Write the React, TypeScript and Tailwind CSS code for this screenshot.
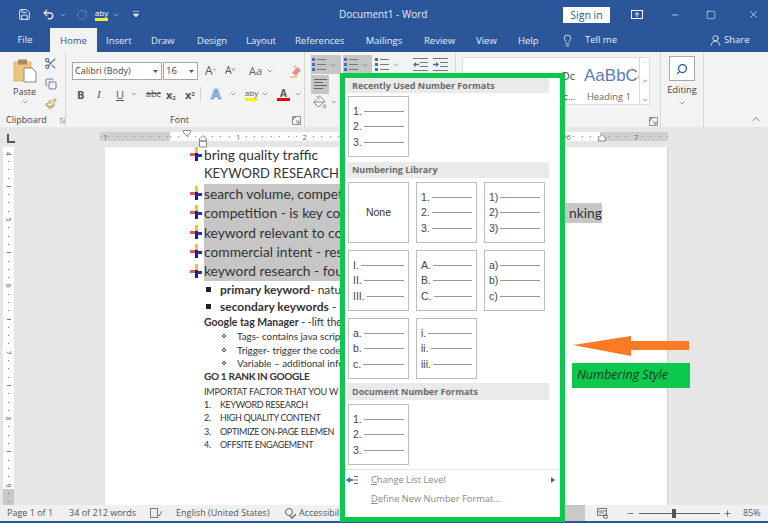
import React from "react";
import { Save, Undo2, RotateCw, ChevronDown, Scissors, Copy, Paintbrush, Lightbulb, UserRound, X, Minus, Square, Search, ChevronUp, Plus, PaintBucket } from "lucide-react";

const ui = "font-['Open_Sans',sans-serif]";

function Launcher() {
  return (
    <svg width="9" height="9" viewBox="0 0 9 9" className="text-[#777]">
      <path d="M.5 8.5V.5h8v8z M4 1.5H1.5V4 M4 4l3 3 M7 4.5V7H4.5" fill="none" stroke="currentColor" strokeWidth="0.8" />
    </svg>
  );
}

function Chev({ c = "text-[#777]", s = 8 }: { c?: string; s?: number }) {
  return <ChevronDown size={s} className={c} strokeWidth={2} />;
}

function ListGlyph({ hl }: { hl?: boolean }) {
  return (
    <svg width="15" height="15" viewBox="0 0 15 15">
      <g fill={hl ? "#3f73b5" : "#2b79c2"}>
        <rect x="0" y="1" width="3" height="3" />
        <rect x="0" y="6" width="3" height="3" />
        <rect x="0" y="11" width="3" height="3" />
      </g>
      <g stroke="#777" strokeWidth="1">
        <path d="M5 2.5h9M5 7.5h9M5 12.5h9" />
      </g>
    </svg>
  );
}

function IndentGlyph({ dir }: { dir: "l" | "r" }) {
  return (
    <svg width="15" height="13" viewBox="0 0 15 13">
      <g stroke="#777" strokeWidth="1">
        <path d="M0 .5h15M7 4.5h8M7 8.5h8M0 12.5h15" />
      </g>
      <path d={dir === "l" ? "M0 6.5l3-2.5v1.7h3v1.6H3V9z" : "M6 6.5L3 4v1.7H0v1.6h3V9z"} fill="#2b79c2" />
    </svg>
  );
}

function Tile({ rows, children }: { rows?: string[]; children?: React.ReactNode }) {
  return (
    <div className="w-[61px] h-[61px] border border-[#bdbdbd] bg-white flex flex-col justify-center gap-[4px] pl-[4px] pr-[4px] font-['Liberation_Sans',sans-serif] text-[10.5px] text-[#444]">
      {rows
        ? rows.map((r) => (
            <div key={r} className="h-[11.5px] flex items-center gap-[2px] leading-none">
              <span>{r}</span>
              <span className="flex-1 h-px bg-[#999]" />
            </div>
          ))
        : children}
    </div>
  );
}

function MenuHeader({ children, h }: { children: React.ReactNode; h: string }) {
  return (
    <div className={`${h} w-[202px] bg-[#eaeaea] flex items-center pl-[5px] text-[9px] font-bold text-[#6a6a6a] ${ui}`}>
      {children}
    </div>
  );
}

function IndentGlyphSmall() {
  return (
    <svg width="12" height="8" viewBox="0 0 12 8">
      <path d="M0 4l4-3v2h3v2H4v2z" fill="#2b79c2" />
      <path d="M8 .5h4M8 4h4M8 7.5h4" stroke="#666" strokeWidth="1" />
    </svg>
  );
}

function Dropdown() {
  return (
    <div className="absolute left-[340px] top-[73px] w-[225px] h-[449px] border-[5px] border-[#0dc84f] bg-white flex flex-col pl-[2px] pt-0">
      <MenuHeader h="h-[15px]">Recently Used Number Formats</MenuHeader>
      <div className="mt-[3px] ml-px">
        <Tile rows={["1.", "2.", "3."]} />
      </div>
      <div className="mt-[5px]">
        <MenuHeader h="h-[16px]">Numbering Library</MenuHeader>
      </div>
      <div className="mt-[4px] ml-px grid grid-cols-[61px_61px_61px] gap-[7px]">
        <Tile>
          <div className="text-center text-[10.5px] text-[#333]">None</div>
        </Tile>
        <Tile rows={["1.", "2.", "3."]} />
        <Tile rows={["1)", "2)", "3)"]} />
        <Tile rows={["I.", "II.", "III."]} />
        <Tile rows={["A.", "B.", "C."]} />
        <Tile rows={["a)", "b)", "c)"]} />
        <Tile rows={["a.", "b.", "c."]} />
        <Tile rows={["i.", "ii.", "iii."]} />
      </div>
      <div className="mt-[4px]">
        <MenuHeader h="h-[17px]">Document Number Formats</MenuHeader>
      </div>
      <div className="mt-[4px] ml-px">
        <Tile rows={["1.", "2.", "3."]} />
      </div>
      <div className="mt-[4px] -ml-[2px] h-px w-[214px] bg-[#e4e4e4]" />
      <div className={`h-[20px] flex items-center text-[9.3px] text-[#8a8a8a] ${ui}`}>
        <span className="w-[25px] -ml-px">
          <IndentGlyphSmall />
        </span>
        <span><u>C</u>hange List Level</span>
        <svg width="4" height="6" viewBox="0 0 4 6" className="ml-auto mr-[5px]"><path d="M0 0l4 3-4 3z" fill="#666" /></svg>
      </div>
      <div className={`h-[18px] flex items-center pl-[24px] text-[9.3px] text-[#8a8a8a] ${ui}`}>
        <span><u>D</u>efine New Number Format...</span>
      </div>
    </div>
  );
}

function TitleBar() {
  return (
    <div className={`h-[29px] flex items-center text-white ${ui}`}>
      <span className="w-[18px]" />
      <Save size={13} strokeWidth={1.6} />
      <span className="w-[11px]" />
      <Undo2 size={13} strokeWidth={2} />
      <span className="w-[4px]" />
      <Chev c="text-[#b7c7e0]" />
      <span className="w-[9px]" />
      <RotateCw size={12} className="text-[#5f7fb5]" />
      <span className="w-[6px]" />
      <div className="w-[15px] h-[14px] flex flex-col items-center">
        <span className="text-[8px] leading-[10px]">aby</span>
        <span className="w-[13px] h-[3px] bg-[#f5ee2c]" />
      </div>
      <span className="w-[3px]" />
      <Chev c="text-[#b7c7e0]" />
      <span className="w-[13px]" />
      <svg width="6" height="7" viewBox="0 0 6 7"><path d="M0 .5h6M0 3h6l-3 3z" fill="#dfe6f2" stroke="#dfe6f2" strokeWidth="0.6" /></svg>
      <span className="w-[200px]" />
      <span className="text-[10px] text-[#e4eaf4] w-[224px] whitespace-pre">Document1 - Word</span>
      <span className="w-[47px] h-[16px] bg-white text-[#2b579a] text-[10.5px] leading-[16px] text-center">Sign in</span>
      <span className="w-[21px]" />
      <svg width="12" height="9" viewBox="0 0 12 9" className="mb-[1px]"><rect x=".5" y=".5" width="11" height="8" fill="none" stroke="#fff" /><path d="M6 7V3M4 4.5L6 2.5 8 4.5" fill="none" stroke="#fff" /></svg>
      <span className="w-[27px]" />
      <Minus size={10} strokeWidth={1.5} className="text-white" />
      <span className="w-[26px]" />
      <Square size={10} strokeWidth={1.3} className="text-white" />
      <span className="w-[32px]" />
      <X size={11} strokeWidth={1.5} className="text-white" />
    </div>
  );
}

function Tabs() {
  const t = "text-[9.5px] text-[#e6ecf6] text-center whitespace-nowrap";
  return (
    <div className={`h-[23px] flex items-stretch ${ui}`}>
      <span className="w-[13px]" />
      <span className={`${t} w-[24px] leading-[22px]`}>File</span>
      <span className="w-[13px]" />
      <span className="w-[47px] -mt-px bg-[#f3f3f3] text-[#2b579a] text-[9.5px] text-center leading-[26px]">Home</span>
      <span className="w-[9px]" />
      <span className={`${t} w-[20px] leading-[24px]`}>Insert</span>
      <span className="w-[25px]" />
      <span className={`${t} w-[22px] leading-[24px]`}>Draw</span>
      <span className="w-[24px]" />
      <span className={`${t} w-[30px] leading-[24px]`}>Design</span>
      <span className="w-[19px]" />
      <span className={`${t} w-[29px] leading-[24px]`}>Layout</span>
      <span className="w-[20px]" />
      <span className={`${t} w-[46px] leading-[24px]`}>References</span>
      <span className="w-[24px]" />
      <span className={`${t} w-[38px] leading-[24px]`}>Mailings</span>
      <span className="w-[21px]" />
      <span className={`${t} w-[30px] leading-[24px]`}>Review</span>
      <span className="w-[22px]" />
      <span className={`${t} w-[20px] leading-[24px]`}>View</span>
      <span className="w-[22px]" />
      <span className={`${t} w-[20px] leading-[24px]`}>Help</span>
      <span className="w-[23px]" />
      <span className="w-[24px] flex items-center"><Lightbulb size={13} className="text-white" strokeWidth={1.4} /></span>
      <span className={`${t} w-[31px] leading-[22px]`}>Tell me</span>
      <span className="w-[93px]" />
      <span className="w-[15px] flex items-center"><UserRound size={13} className="text-white" strokeWidth={1.4} /></span>
      <span className={`${t} w-[25px] leading-[22px]`}>Share</span>
    </div>
  );
}

function Clipboard() {
  return (
    <div className="w-[66px] h-[75px] pl-[6px] border-r border-[#d8d8d8] flex flex-col">
      <div className="flex h-[61px]">
        <div className="w-[37px] flex flex-col items-center text-[9px] text-[#444] pt-[7px]">
          <svg width="24" height="24" viewBox="0 0 24 24">
            <rect x="1" y="3" width="17" height="19" fill="#eec57f" stroke="#c99a4d" strokeWidth="0.6" />
            <rect x="5" y="0.5" width="9" height="5" fill="#a88a58" />
            <path d="M11 9h8l4 4v10H11z" fill="#fff" stroke="#888" />
          </svg>
          <span className="leading-[12px] mt-[3px]">Paste</span>
          <Chev />
        </div>
        <div className="flex flex-col items-center gap-[8px] pt-[5px] ml-[1px]">
          <Scissors size={13} className="text-[#51698f]" />
          <Copy size={12} className="text-[#6a7c99]" />
          <Paintbrush size={12} className="text-[#b98b3a]" />
        </div>
      </div>
      <div className="flex items-center h-[14px] text-[9px] text-[#444] gap-[13px]">
        <span>Clipboard</span>
        <Launcher />
      </div>
    </div>
  );
}

function FontGroup() {
  const b = "text-[11px] text-[#555] leading-none";
  return (
    <div className="w-[239px] h-[75px] border-r border-[#d8d8d8] flex flex-col">
      <div className="h-[61px] flex flex-col pl-[6px]">
        <div className="flex items-center mt-[10px] h-[18px]">
          <div className="w-[90px] h-[18px] border border-[#a8a8a8] bg-white flex items-center pl-[2px] pr-[3px] text-[9px] text-[#444]">
            Calibri (Body)
            <svg width="5" height="3" viewBox="0 0 5 3" className="ml-auto"><path d="M0 0h5L2.5 3z" fill="#555" /></svg>
          </div>
          <div className="w-[35px] ml-[1px] h-[18px] border border-[#a8a8a8] bg-white flex items-center pl-[2px] pr-[3px] text-[9.5px] text-[#444]">
            16
            <svg width="5" height="3" viewBox="0 0 5 3" className="ml-auto"><path d="M0 0h5L2.5 3z" fill="#555" /></svg>
          </div>
          <span className="ml-[7px] w-[20px] text-[12px] text-[#555]">A<sup className="text-[6px] text-[#2b79c2]">^</sup></span>
          <span className="w-[22px] text-[10.5px] text-[#555]">A<sup className="text-[6px] text-[#2b79c2]">v</sup></span>
          <span className="ml-[2px] text-[11px] text-[#666] w-[14px]">Aa</span>
          <span className="ml-[3px]"><Chev /></span>
          <span className="ml-[16px]">
            <svg width="13" height="13" viewBox="0 0 13 13"><path d="M2 8l5-6 4 3-5 6z" fill="#e98a9a" /><path d="M0 12h7" stroke="#d8a93c" /><path d="M5 0v3" stroke="#d8a93c" /></svg>
          </span>
        </div>
        <div className="flex items-center mt-[5px] h-[18px]">
          <span className={`${b} w-[20px] ml-[5px] font-bold`}>B</span>
          <span className={`${b} w-[19px] italic font-['Liberation_Serif',serif]`}>I</span>
          <span className={`${b} w-[14px] underline`}>U</span>
          <Chev />
          <span className="ml-[8px] text-[9px] text-[#555] line-through w-[20px]">abc</span>
          <span className={`${b} w-[19px] font-bold`}>x<sub className="text-[6px]">2</sub></span>
          <span className={`${b} w-[15px] font-bold`}>x<sup className="text-[6px]">2</sup></span>
          <span className="w-px h-[14px] bg-[#d0d0d0]" />
          <span className="ml-[10px] w-[17px] text-[14px] leading-none font-bold text-[#a9c8ee] [-webkit-text-stroke:0.6px_#2b79c2]">A</span>
          <span className="ml-[1px]"><Chev /></span>
          <div className="ml-[8px] w-[13px] flex flex-col items-center">
            <span className="text-[8px] leading-[10px] text-[#555]">aby</span>
            <span className="w-[13px] h-[3px] bg-[#ffee00]" />
          </div>
          <span className="ml-[3px]"><Chev /></span>
          <div className="ml-[8px] w-[13px] flex flex-col items-center">
            <span className="text-[10px] leading-[10px] font-bold text-[#555]">A</span>
            <span className="w-[13px] h-[3px] bg-[#e8000d]" />
          </div>
          <span className="ml-[4px]"><Chev /></span>
        </div>
      </div>
      <div className="h-[14px] flex items-center text-[9px] text-[#444]">
        <span className="flex-1 text-center pl-[1px]">Font</span>
        <span className="mr-[3px]"><Launcher /></span>
      </div>
    </div>
  );
}

function ParagraphGroup() {
  return (
    <div className="w-[151px] h-[75px] pl-[6px] pt-[3px] border-r border-[#d8d8d8] flex flex-col">
      <div className="flex items-center">
        <div className="w-[30px] h-[19px] bg-[#c6c6c6] flex items-center pl-[1px] gap-[2px]"><ListGlyph hl /><Chev /></div>
        <div className="ml-[2px] w-[29px] h-[19px] bg-[#c6c6c6] flex items-center pl-[1px] gap-[2px]"><ListGlyph hl /><Chev /></div>
        <div className="ml-[3px] w-[26px] h-[19px] flex items-center gap-[2px]"><ListGlyph /><Chev /></div>
        <span className="ml-[12px]"><IndentGlyph dir="l" /></span>
        <span className="ml-[5px]"><IndentGlyph dir="r" /></span>
      </div>
      <div className="flex items-center mt-[1px]">
        <div className="w-[18px] h-[19px] bg-[#c6c6c6] flex items-center justify-center">
          <svg width="13" height="11" viewBox="0 0 13 11"><path d="M0 .5h13M0 3.5h9M0 6.5h13M0 9.5h9" stroke="#666" /></svg>
        </div>
      </div>
      <div className="flex items-center mt-[1px] pl-[2px] gap-[3px]">
        <PaintBucket size={14} className="text-[#777]" strokeWidth={1.4} />
        <Chev />
      </div>
    </div>
  );
}

function Gallery() {
  return (
    <div className="w-[205px] h-[75px] border-r border-[#d8d8d8] flex flex-col pl-[6px] pt-[5px]">
      <div className="w-[188px] h-[48px] bg-white border border-[#dcdcdc] flex justify-end">
        <div className="flex flex-col items-end mt-[6px] mr-[5px] text-[#444]">
          <span className="text-[11px] leading-[24px]">Dc</span>
          <span className="text-[9px] leading-[14px] mt-[2px]">c...</span>
        </div>
        <div className="flex flex-col items-start mt-[6px] ml-[4px] w-[55px] overflow-hidden">
          <span className="text-[17px] leading-[24px] text-[#5b7db0] font-['Liberation_Sans',sans-serif] whitespace-nowrap">AaBbCc</span>
          <span className="text-[9.3px] leading-[14px] mt-[2px] ml-[3px] text-[#666] whitespace-nowrap">Heading 1</span>
        </div>
        <div className="w-[10px] border-l border-[#dcdcdc] flex flex-col items-center justify-between text-[#777]">
          <ChevronUp size={8} className="text-[#ccc]" />
          <ChevronDown size={8} />
          <ChevronDown size={8} />
        </div>
      </div>
      <div className="mt-[12px] flex justify-end pr-[2px]"><Launcher /></div>
    </div>
  );
}

function Editing() {
  return (
    <div className="w-[43px] h-[75px] border-r border-[#d8d8d8] flex flex-col items-center pt-[4px]">
      <div className="w-[26px] h-[25px] border border-[#a8a8a8] bg-white flex items-center justify-center">
        <Search size={12} strokeWidth={2.5} className="text-[#2b579a] -scale-x-100" />
      </div>
      <span className="text-[9.3px] text-[#444] mt-[2px] leading-[14px]">Editing</span>
      <span className="mt-[2px]"><Chev /></span>
    </div>
  );
}

function Ribbon() {
  return (
    <div className={`h-[75px] bg-[#f3f3f3] flex ${ui}`}>
      <Clipboard />
      <FontGroup />
      <ParagraphGroup />
      <Gallery />
      <Editing />
      <div className="flex-1 flex items-end justify-end pr-[6px] pb-[2px]">
        <ChevronUp size={12} className="text-[#777]" />
      </div>
    </div>
  );
}

function Ruler() {
  const ticks = "relative text-[8px] text-[#666] leading-[9px]";
  const dots = "absolute left-0 right-0 top-[4px] h-px bg-[repeating-linear-gradient(90deg,#888_0,#888_1px,transparent_1px,transparent_8.4px)]";
  return (
    <div className={`relative h-[20px] bg-[#e6e6e6] flex items-start pt-[5px] ${ui}`}>
      <span className="w-[7px]" />
      <span className="w-[8px] h-[9px] mt-[2px] border-l-2 border-b-2 border-[#555] mr-[85px]" />
      <div className="relative w-[70px] h-[9px] bg-[#cfcfcf] flex items-center pl-[3px]">
        <span className={dots} />
        <span className={ticks}>1</span>
      </div>
      <div className="relative w-[430px] h-[9px] bg-white flex items-center">
        <span className={dots} />
        <span className={`${ticks} ml-[66px] bg-white`}>1</span>
        <span className={`${ticks} ml-[62px] bg-white`}>2</span>
        <span className={`${ticks} ml-[259px] bg-white`}>6</span>
      </div>
      <div className="relative w-[68px] h-[9px] bg-[#cfcfcf] flex items-center pl-[34px]">
        <span className={dots} />
        <span className={`${ticks} bg-[#cfcfcf]`}>7</span>
      </div>
      <svg width="8" height="7" viewBox="0 0 8 7" className="absolute left-[183px] top-[3px]"><path d="M.5.5h7v2L4 6 .5 2.500z" fill="#fff" stroke="#888" /></svg>
      <svg width="8" height="13" viewBox="0 0 8 13" className="absolute left-[199px] top-[8px]"><path d="M4 .5L7.500 4v2h-7V4zM.5 6h7v6h-7z" fill="#fff" stroke="#888" /></svg>
      <svg width="8" height="8" viewBox="0 0 8 8" className="absolute left-[598px] top-[7px]"><path d="M4 .5L7.500 4v3h-7V4z" fill="#fff" stroke="#888" /></svg>
    </div>
  );
}

function VBullet() {
  return (
    <svg width="12" height="15" viewBox="0 0 12 15" className="shrink-0">
      <rect x="0" y="6" width="6" height="3" fill="#e85a4a" />
      <rect x="5" y="0" width="3" height="6" fill="#f2c230" />
      <rect x="5" y="6" width="3" height="8" fill="#1c1c8c" />
      <rect x="7" y="7" width="5" height="3" fill="#2233b0" />
    </svg>
  );
}

function BulletLine({ children, sel, icon = true }: { children: React.ReactNode; sel?: boolean; icon?: boolean }) {
  return (
    <div className="h-[19.4px] flex items-center">
      <span className="w-[14px] -ml-[14px] flex">{icon && <VBullet />}</span>
      <span className={`text-[13.8px] text-[#333] leading-[19.4px] whitespace-nowrap ${sel ? "bg-[#c6c6c6] w-[140px]" : ""}`}>{children}</span>
    </div>
  );
}

function Page() {
  return (
    <div className="w-[563px] h-[358px] bg-white border-r border-[#cfcfcf] pl-[99px] font-['Lato',sans-serif] overflow-hidden">
      <div className="-mt-[2px]">
        <BulletLine>bring quality traffic</BulletLine>
        <div className="h-[19.4px] flex items-center text-[13px] leading-[19.4px] text-[#333] whitespace-nowrap">KEYWORD RESEARCH</div>
        <BulletLine sel>search volume, compet</BulletLine>
        <div className="h-[19.4px] flex items-center">
          <span className="w-[14px] -ml-[14px] flex"><VBullet /></span>
          <span className="bg-[#c6c6c6] w-[398px] flex justify-between text-[13.8px] text-[#333] leading-[19.4px]">
            <span>competition - is key co</span>
            <span>nking</span>
          </span>
        </div>
        <BulletLine sel>keyword relevant to co</BulletLine>
        <BulletLine sel>commercial intent - res</BulletLine>
        <BulletLine sel>keyword research - fou</BulletLine>
      </div>
      <div className="text-[12px] text-[#333] leading-[17px] pl-[2px]">
        <div className="flex items-center h-[17px]"><span className="w-[5px] h-[5px] bg-[#222] mr-[9px]" /><b>primary keyword</b>- natu</div>
        <div className="flex items-center h-[17px]"><span className="w-[5px] h-[5px] bg-[#222] mr-[9px]" /><b>secondary keywords</b>&nbsp;-</div>
      </div>
      <div className="text-[10.5px] leading-[14px] text-[#333]">
        <div className="h-[15px] whitespace-nowrap"><b>Google tag Manager</b> - -lift the h</div>
        {["Tags- contains java script", "Trigger- trigger the code", "Variable – additional info"].map((s) => (
          <div key={s} className="h-[13.5px] flex items-center pl-[18px] text-[9.8px] whitespace-nowrap">
            <span className="w-[4px] h-[4px] rounded-full border border-[#444] mr-[11px]" />
            {s}
          </div>
        ))}
        <div className="h-[15px] leading-[13px] font-bold text-[10px] tracking-[-0.3px] whitespace-nowrap">GO 1 RANK IN GOOGLE</div>
        <div className="h-[13px] leading-[13px] text-[9px] tracking-[-0.15px] whitespace-nowrap">IMPORTAT FACTOR THAT YOU W</div>
        {["KEYWORD RESEARCH", "HIGH QUALITY CONTENT", "OPTIMIZE ON-PAGE ELEMEN", "OFFSITE ENGAGEMENT"].map((s, i) => (
          <div key={s} className="h-[13.4px] flex items-center text-[9px] tracking-[-0.35px] whitespace-nowrap">
            <span className="w-[16px]">{i + 1}.</span>
            {s}
          </div>
        ))}
      </div>
    </div>
  );
}

function VRuler() {
  const items = Array.from({ length: 43 }, (_, i) => i);
  return (
    <div className={`w-[11px] ml-[3px] h-[358px] bg-white flex flex-col items-center overflow-hidden pt-[2px] ${ui}`}>
      {items.map((i) => (
        <div key={i} className={`h-[8.3px] w-full flex items-center justify-center shrink-0 ${i >= 41 ? "bg-[#c8c8c8]" : ""}`}>
          {i % 8 === 0 ? (
            <span className="text-[7px] leading-none text-[#666] rotate-90">{4 + i / 8}</span>
          ) : i % 8 === 4 ? (
            <span className="w-[4px] h-px bg-[#777]" />
          ) : (
            <span className="w-px h-px bg-[#777]" />
          )}
        </div>
      ))}
    </div>
  );
}

function Status() {
  return (
    <div className={`h-[16px] bg-[#f0f0f0] flex items-center text-[9px] text-[#555] whitespace-nowrap ${ui}`}>
      <span className="ml-[7px] w-[62px]">Page 1 of 1</span>
      <span className="w-[81px]">34 of 212 words</span>
      <span className="w-[26px]">
        <svg width="12" height="10" viewBox="0 0 12 10"><rect x=".5" y=".5" width="7" height="9" fill="none" stroke="#777" /><path d="M7 6l2 2 3-5" fill="none" stroke="#777" /></svg>
      </span>
      <span className="w-[108px]">English (United States)</span>
      <span className="w-[15px]">
        <svg width="12" height="12" viewBox="0 0 12 12"><circle cx="5" cy="5" r="3.5" fill="none" stroke="#666" /><path d="M6 9l2 2 4-4" fill="none" stroke="#666" strokeWidth="1.3" /></svg>
      </span>
      <span className="w-[40px]">Accessibil</span>
      <span className="w-[226px]" />
      <div className="w-[20px] h-[16px] bg-[#c9c9c9]" />
      <svg width="11" height="11" viewBox="0 0 11 11" className="ml-[12px]"><path d="M.5 .5h9v7h-9z M0 3h10M2 5h5" fill="none" stroke="#777" /><circle cx="8.5" cy="8.5" r="2" fill="none" stroke="#666" /></svg>
      <Minus size={9} className="ml-[18px] text-[#555]" strokeWidth={2} />
      <div className="ml-[4px] w-[81px] h-px bg-[#666] flex items-center pl-[33px]">
        <span className="w-[4px] h-[9px] bg-[#555]" />
      </div>
      <Plus size={9} className="ml-[3px] text-[#555]" strokeWidth={2} />
      <span className="ml-[11px]">85%</span>
    </div>
  );
}

export default function App() {
  return (
    <div className={`relative w-[768px] h-[523px] overflow-hidden bg-[#e6e6e6] ${ui}`}>
      <div className="bg-[#2b579a] h-[52px]">
        <TitleBar />
        <Tabs />
      </div>
      <Ribbon />
      <Ruler />
      <div className="h-[358px] flex">
        <VRuler />
        <div className="w-[91px]" />
        <Page />
      </div>
      <Status />
      <div className="h-[2px] bg-[#2b579a]" />
      <Dropdown />
      <svg width="117" height="20" viewBox="0 0 117 20" className="absolute left-[573px] top-[336px]">
        <path d="M0 9L58 0v5h58v9H58v6z" fill="#fb7a26" />
      </svg>
      <div className="absolute left-[572px] top-[363px] w-[118px] h-[25px] bg-[#0dc84f] flex items-center pl-[5px] text-[12.5px] italic text-[#0b3d1c]">
        Numbering Style
      </div>
    </div>
  );
}
